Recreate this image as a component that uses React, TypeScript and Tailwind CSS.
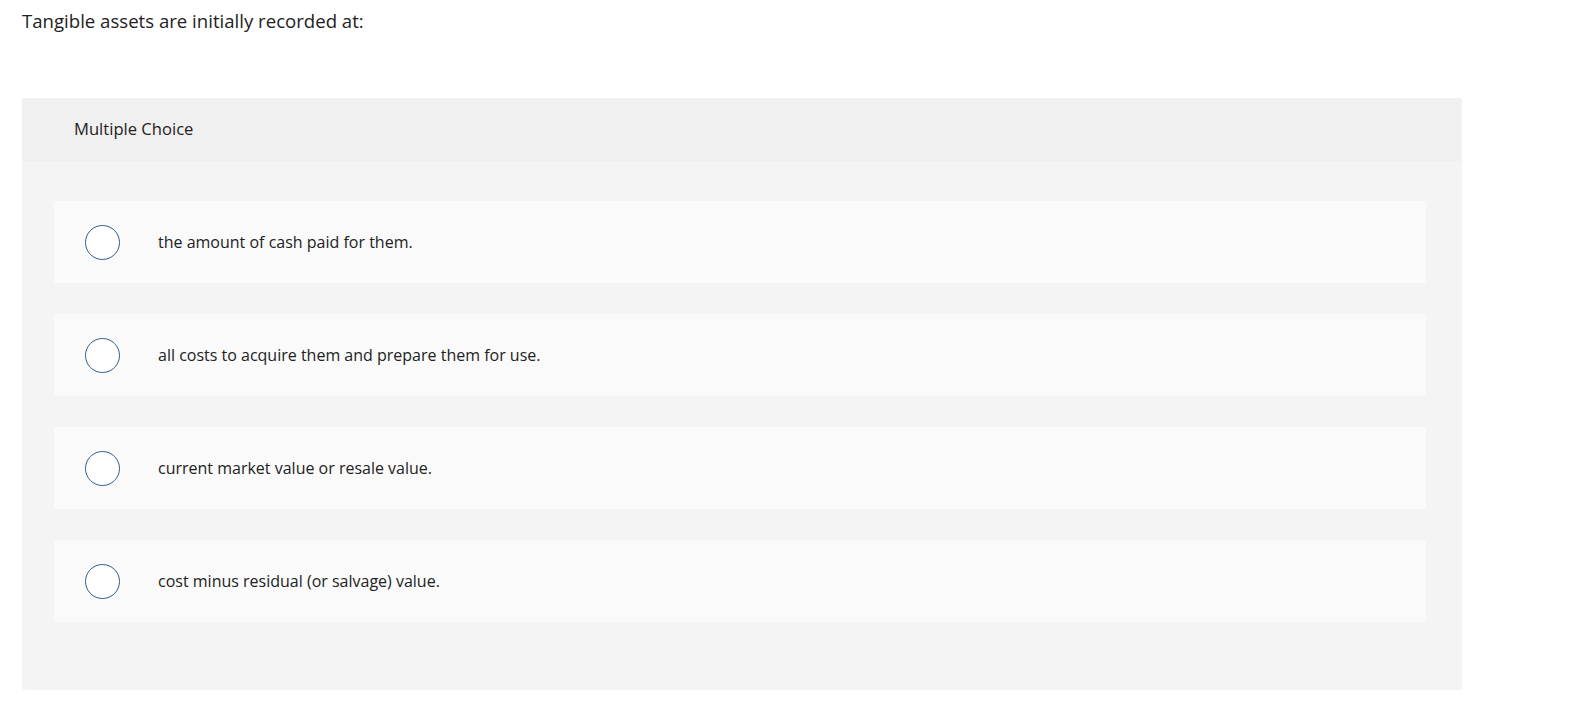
const choices = [
  'the amount of cash paid for them.',
  'all costs to acquire them and prepare them for use.',
  'current market value or resale value.',
  'cost minus residual (or salvage) value.',
];

export default function App() {
  return (
    <div className="min-h-screen bg-white text-[#333] font-['Open_Sans','Liberation_Sans',sans-serif]">
      <div className="pl-[22px] pt-[8px] text-[18.6px] leading-[26px] text-[#222]">Tangible assets are initially recorded at:</div>

      <div className="ml-[22px] mt-[64px] w-[1440px] rounded-[3px] bg-[#f4f4f4]">
        <div className="h-[63px] rounded-t-[3px] bg-[#f0f0f0] pl-[52px] flex items-center text-[16.6px] text-[#222]">
          Multiple Choice
        </div>
        <div className="pt-[40px] pb-[68px] pl-[32px] pr-[36px] flex flex-col gap-[31px]">
          {choices.map((c) => (
            <label key={c} className="h-[82px] rounded-[3px] bg-[#fafafa] flex items-center pl-[31px] cursor-pointer">
              <span className="w-[35px] h-[35px] rounded-full border-[1.5px] border-[#2f5f8f] bg-white shrink-0" />
              <span className="ml-[38px] text-[16px] text-[#222]">{c}</span>
            </label>
          ))}
        </div>
      </div>
    </div>
  );
}
